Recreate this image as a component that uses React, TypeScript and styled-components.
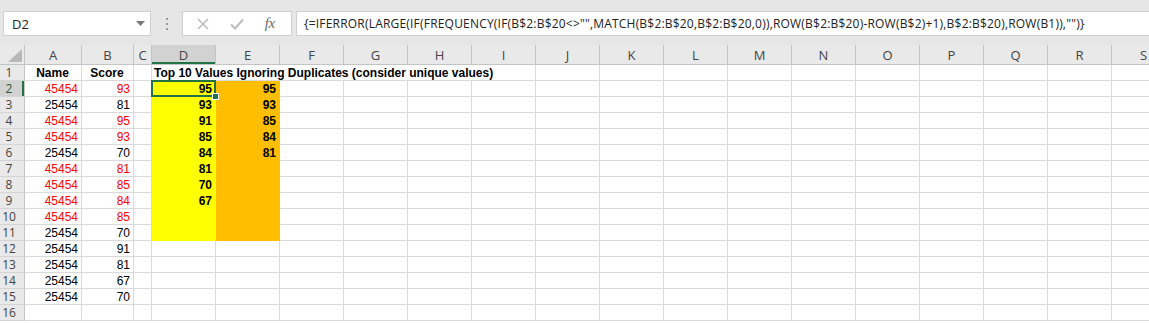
import React from 'react';
import styled, { createGlobalStyle, css } from 'styled-components';

const GlobalStyle = createGlobalStyle`
    body {
        margin: 0;
        background: #ffffff;
        overflow: hidden;
    }
`;

const uiFont = `"Open Sans", "Noto Sans", "DejaVu Sans", sans-serif`;
const cellFont = `"Liberation Sans", Arial, sans-serif`;
const excelGreen = '#217346';

const Window = styled.div`
    width: 1149px;
    height: 323px;
    overflow: hidden;
    background: #ffffff;
`;

const FormulaBar = styled.div`
    display: flex;
    align-items: flex-start;
    height: 45px;
    box-sizing: border-box;
    padding: 11px 0 0 3px;
    background: #e6e6e6;
`;

const BoxBase = css`
    box-sizing: border-box;
    height: 25px;
    background: #ffffff;
    border: 1px solid #d0d0d0;
    display: flex;
    align-items: center;
`;

const NameBox = styled.div`
    ${BoxBase}
    width: 148px;
    padding: 0 5px 0 8px;
    justify-content: space-between;
    font-family: ${uiFont};
    font-size: 13px;
    color: #222;
`;

const Grip = styled.div`
    width: 31px;
    height: 25px;
    display: flex;
    flex-direction: column;
    align-items: center;
    justify-content: center;
    gap: 3px;

    > span {
        width: 2px;
        height: 2px;
        background: #9a9a9a;
    }
`;

const FxButtons = styled.div`
    ${BoxBase}
    width: 110px;
    justify-content: space-around;
    padding: 0 6px 0 4px;
`;

const FxLabel = styled.span`
    font-family: "Liberation Serif", "DejaVu Serif", serif;
    font-style: italic;
    font-size: 15px;
    color: #6a6a6a;
    letter-spacing: -0.5px;
`;

const FormulaInput = styled.div`
    ${BoxBase}
    flex: 1;
    margin-left: 4px;
    border-right: none;
    padding-left: 7px;
    font-family: ${uiFont};
    font-size: 12px;
    letter-spacing: 0.2px;
    color: #222;
    white-space: nowrap;
    overflow: hidden;
`;

const Sheet = styled.div`
    display: grid;
    grid-template-columns: 25px 57px 52px 18px repeat(15, 64px) 64px;
    grid-auto-rows: 16px;
    grid-template-rows: 20px;
`;

const HeaderCell = styled.div<{ $active?: boolean }>`
    box-sizing: border-box;
    display: flex;
    align-items: center;
    justify-content: center;
    background: ${(p) => (p.$active ? '#d2d2d2' : '#e9e9e9')};
    border-right: 1px solid #c4c4c4;
    border-bottom: 1px solid #c4c4c4;
    box-shadow: ${(p) => (p.$active ? `inset 0 -2px 0 ${excelGreen}` : 'none')};
    font-family: ${uiFont};
    font-size: 13px;
    color: #444;
`;

const Corner = styled(HeaderCell)`
    align-items: flex-end;
    justify-content: flex-end;
    padding: 0 2px 2px 0;
`;

const RowHeader = styled.div<{ $active?: boolean }>`
    box-sizing: border-box;
    display: flex;
    align-items: center;
    justify-content: center;
    padding-right: 6px;
    background: ${(p) => (p.$active ? '#d2d2d2' : '#e9e9e9')};
    border-right: 1px solid #c4c4c4;
    border-bottom: 1px solid #d4d4d4;
    box-shadow: ${(p) => (p.$active ? `inset -2px 0 0 ${excelGreen}` : 'none')};
    font-family: ${uiFont};
    font-size: 12px;
    color: ${(p) => (p.$active ? '#1e5b38' : '#444')};
`;

type CellProps = {
    $fill?: string;
    $align?: 'left' | 'center' | 'right';
    $bold?: boolean;
    $color?: string;
    $span?: number;
    $selected?: boolean;
};

const Cell = styled.div<CellProps>`
    position: relative;
    box-sizing: border-box;
    grid-column: span ${(p) => p.$span || 1};
    padding: 1px 3px 0 2px;
    background: ${(p) => p.$fill || '#ffffff'};
    border-right: 1px solid ${(p) => p.$fill || '#dadada'};
    border-bottom: 1px solid ${(p) => p.$fill || '#dadada'};
    font-family: ${cellFont};
    font-size: 12px;
    line-height: 15px;
    font-weight: ${(p) => (p.$bold ? 700 : 400)};
    color: ${(p) => p.$color || '#000'};
    text-align: ${(p) => p.$align || 'right'};
    white-space: nowrap;

    ${(p) =>
        p.$selected &&
        css`
            &::after {
                content: '';
                position: absolute;
                inset: -1px -1px -1px -1px;
                border: 2px solid ${excelGreen};
                pointer-events: none;
            }
            &::before {
                content: '';
                position: absolute;
                right: -4px;
                bottom: -4px;
                width: 5px;
                height: 5px;
                background: ${excelGreen};
                border: 1px solid #fff;
                z-index: 2;
            }
        `}
`;

const columns = ['A', 'B', 'C', 'D', 'E', 'F', 'G', 'H', 'I', 'J', 'K', 'L', 'M', 'N', 'O', 'P', 'Q', 'R', 'S'];

const data: [string, string, boolean][] = [
    ['45454', '93', true],
    ['25454', '81', false],
    ['45454', '95', true],
    ['45454', '93', true],
    ['25454', '70', false],
    ['45454', '81', true],
    ['45454', '85', true],
    ['45454', '84', true],
    ['45454', '85', true],
    ['25454', '70', false],
    ['25454', '91', false],
    ['25454', '81', false],
    ['25454', '67', false],
    ['25454', '70', false],
];

const topUnique = ['95', '93', '91', '85', '84', '81', '70', '67'];
const topDistinct = ['95', '93', '85', '84', '81'];

const YELLOW = '#ffff00';
const ORANGE = '#ffbf00';
const RED = '#ff0000';

const formula =
    '{=IFERROR(LARGE(IF(FREQUENCY(IF(B$2:B$20<>"",MATCH(B$2:B$20,B$2:B$20,0)),ROW(B$2:B$20)-ROW(B$2)+1),B$2:B$20),ROW(B1)),"")}';

function EmptyCells({ count }: { count: number }) {
    return (
        <>
            {Array.from({ length: count }).map((_, i) => (
                <Cell key={i} />
            ))}
        </>
    );
}

export default function App() {
    const rows = [];
    for (let r = 2; r <= 16; r++) {
        const item = data[r - 2];
        const filled = r <= 11;
        rows.push(
            <React.Fragment key={r}>
                <RowHeader $active={r === 2}>{r}</RowHeader>
                <Cell $color={item && item[2] ? RED : undefined}>{item ? item[0] : ''}</Cell>
                <Cell $color={item && item[2] ? RED : undefined}>{item ? item[1] : ''}</Cell>
                <Cell />
                <Cell $fill={filled ? YELLOW : undefined} $bold $selected={r === 2}>
                    {topUnique[r - 2] || ''}
                </Cell>
                <Cell $fill={filled ? ORANGE : undefined} $bold>
                    {topDistinct[r - 2] || ''}
                </Cell>
                <EmptyCells count={14} />
            </React.Fragment>
        );
    }

    return (
        <Window>
            <GlobalStyle />
            <FormulaBar>
                <NameBox>
                    <span>D2</span>
                    <svg width="9" height="5" viewBox="0 0 9 5">
                        <polygon points="0,0 9,0 4.5,5" fill="#777" />
                    </svg>
                </NameBox>
                <Grip>
                    <span />
                    <span />
                    <span />
                </Grip>
                <FxButtons>
                    <svg width="12" height="12" viewBox="0 0 12 12">
                        <path d="M1 1 L11 11 M11 1 L1 11" stroke="#bdbdbd" strokeWidth="1.6" fill="none" />
                    </svg>
                    <svg width="14" height="12" viewBox="0 0 14 12">
                        <path d="M1 6.5 L5 10.5 L13 1.5" stroke="#bdbdbd" strokeWidth="2" fill="none" />
                    </svg>
                    <FxLabel>fx</FxLabel>
                </FxButtons>
                <FormulaInput>{formula}</FormulaInput>
            </FormulaBar>
            <Sheet>
                <Corner>
                    <svg width="14" height="13" viewBox="0 0 14 13">
                        <polygon points="14,0 14,13 0,13" fill="#b8b8b8" />
                    </svg>
                </Corner>
                {columns.map((c) => (
                    <HeaderCell key={c} $active={c === 'D'}>
                        {c}
                    </HeaderCell>
                ))}

                <RowHeader>1</RowHeader>
                <Cell $bold $align="center">Name</Cell>
                <Cell $bold $align="center">Score</Cell>
                <Cell />
                <Cell $bold $align="left" $span={6}>
                    Top 10 Values Ignoring Duplicates (consider unique values)
                </Cell>
                <EmptyCells count={10} />
                {rows}
            </Sheet>
        </Window>
    );
}
